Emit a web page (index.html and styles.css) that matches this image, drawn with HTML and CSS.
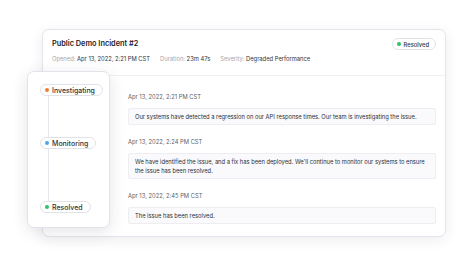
FILE: index.html
```html
<!DOCTYPE html>
<html lang="en">
<head>
<meta charset="utf-8">
<title>Public Demo Incident #2</title>
<link rel="stylesheet" href="styles.css">
</head>
<body>
<div class="scene">
  <section class="incident">
    <header class="incident-head">
      <div class="title-row">
        <h1 class="title">Public Demo Incident #2</h1>
        <span class="badge"><span class="dot dot-green"></span>Resolved</span>
      </div>
      <div class="meta">
        <span class="meta-item"><span class="label">Opened:</span> Apr 13, 2022, 2:21 PM CST</span>
        <span class="meta-item"><span class="label">Duration:</span> 23m 47s</span>
        <span class="meta-item"><span class="label">Severity:</span> Degraded Performance</span>
      </div>
    </header>
    <div class="updates">
      <div class="update">
        <div class="stamp">Apr 13, 2022, 2:21 PM CST</div>
        <div class="message">Our systems have detected a regression on our API response times. Our team is investigating the issue.</div>
      </div>
      <div class="update">
        <div class="stamp">Apr 13, 2022, 2:24 PM CST</div>
        <div class="message">We have identified the issue, and a fix has been deployed. We'll continue to monitor our systems to ensure the issue has been resolved.</div>
      </div>
      <div class="update">
        <div class="stamp">Apr 13, 2022, 2:45 PM CST</div>
        <div class="message">The issue has been resolved.</div>
      </div>
    </div>
  </section>

  <aside class="stages">
    <div class="steps">
      <span class="badge step"><span class="dot dot-orange"></span>Investigating</span>
      <span class="badge step step-monitoring"><span class="dot dot-blue"></span>Monitoring</span>
      <span class="badge step step-resolved"><span class="dot dot-green"></span>Resolved</span>
    </div>
  </aside>
</div>
</body>
</html>
```
FILE: styles.css
```css
* { box-sizing: border-box; }

html, body {
  margin: 0;
  padding: 0;
  background: #ffffff;
}

body {
  font-family: Inter, "Noto Sans", "Liberation Sans", sans-serif;
  color: #2b2f36;
  width: 474px;
  height: 267px;
  overflow: hidden;
}

.scene {
  position: relative;
  padding: 29px 0 0 42px;
}

.incident {
  width: 404px;
  background: #ffffff;
  border: 1px solid #e4e4ec;
  border-radius: 7px;
  box-shadow: 0 3px 14px rgba(40, 40, 70, 0.08);
}

.incident-head {
  padding: 8px 9px 12px 9px;
  border-bottom: 1px solid #f0f0f4;
}

.title-row {
  display: flex;
  align-items: center;
  justify-content: space-between;
  height: 12px;
}

.title {
  margin: 0;
  font-size: 7.35px;
  line-height: 12px;
  font-weight: 600;
  color: #1f2329;
}

.meta {
  margin-top: 4.5px;
  display: flex;
  gap: 10px;
  font-size: 5.8px;
  line-height: 8px;
  color: #30343b;
}

.label { color: #a3a7b0; }

.badge {
  display: inline-flex;
  align-items: center;
  gap: 3px;
  height: 12px;
  padding: 0 6px 0 4px;
  border: 1px solid #e2e3e8;
  border-radius: 999px;
  background: #ffffff;
  font-size: 5.8px;
  font-weight: 500;
  color: #30343b;
  white-space: nowrap;
}

.dot {
  width: 4px;
  height: 4px;
  border-radius: 50%;
  flex: none;
}
.dot-green { background: #2fc163; }
.dot-orange { background: #ef7d32; }
.dot-blue { background: #4aa8e8; }

.updates {
  padding: 17px 9px 12px 85px;
  display: flex;
  flex-direction: column;
  gap: 13px;
}

.stamp {
  font-size: 5.8px;
  line-height: 8px;
  color: #5a5f68;
}

.message {
  margin-top: 7px;
  padding: 3px 6px;
  border: 1px solid #ededf2;
  border-radius: 2px;
  background: #fafafc;
  font-size: 5.77px;
  line-height: 9px;
  color: #2b2f36;
}

.stages {
  position: absolute;
  left: 27px;
  top: 71px;
  width: 83px;
  height: 157px;
  background: #ffffff;
  border: 1px solid #e2e3ea;
  border-radius: 7px;
  box-shadow: 0 4px 16px rgba(40, 40, 70, 0.12);
  padding: 12px 0 0 12px;
}

.steps {
  position: relative;
  display: flex;
  flex-direction: column;
  align-items: flex-start;
}

.steps::before {
  content: "";
  position: absolute;
  left: 7.5px;
  top: 12px;
  height: 105px;
  width: 1px;
  background: #e6e7ec;
}

.step {
  position: relative;
  font-size: 7px;
  height: 12px;
  padding-right: 7px;
}

.step-monitoring { margin-top: 41px; }
.step-resolved { margin-top: 52px; }
```
